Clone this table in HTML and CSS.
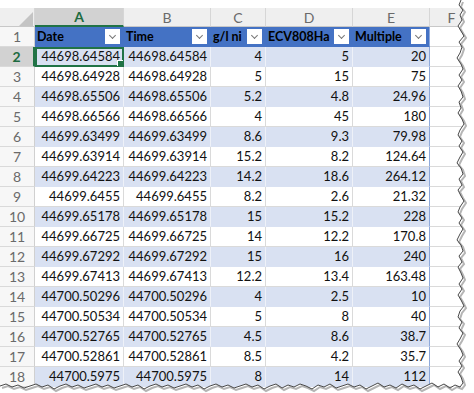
FILE: index.html
```html
<!DOCTYPE html>
<html lang="en">
<head>
    <meta charset="UTF-8">
    <title>Sheet</title>
    <link rel="stylesheet" href="styles.css">
</head>
<body>
<div class="sheet">
    <table class="grid">
        <colgroup>
            <col class="c-rh"><col class="c-a"><col class="c-b"><col class="c-c"><col class="c-d"><col class="c-e"><col class="c-f">
        </colgroup>
        <thead>
            <tr class="col-heads">
                <th class="corner"><svg width="14" height="14" viewBox="0 0 14 14"><polygon points="14,0 14,14 0,14" fill="#c4c4c4"/></svg></th>
                <th class="active">A</th><th>B</th><th>C</th><th>D</th><th>E</th><th>F</th>
            </tr>
        </thead>
        <tbody>
            <tr class="hdr">
                <td class="rh">1</td>
                <td class="th"><span class="label">Date</span><span class="dd"></span></td>
                <td class="th"><span class="label">Time</span><span class="dd"></span></td>
                <td class="th"><span class="label">g/l ni</span><span class="dd"></span></td>
                <td class="th"><span class="label">ECV808Ha</span><span class="dd"></span></td>
                <td class="th last"><span class="label">Multiple</span><span class="dd"></span></td>
                <td></td>
            </tr>
            <tr class="band"><td class="rh sel">2</td><td class="cur">44698.64584<span class="handle"></span></td><td>44698.64584</td><td>4</td><td>5</td><td class="last">20</td><td></td></tr>
            <tr><td class="rh">3</td><td>44698.64928</td><td>44698.64928</td><td>5</td><td>15</td><td class="last">75</td><td></td></tr>
            <tr class="band"><td class="rh">4</td><td>44698.65506</td><td>44698.65506</td><td>5.2</td><td>4.8</td><td class="last">24.96</td><td></td></tr>
            <tr><td class="rh">5</td><td>44698.66566</td><td>44698.66566</td><td>4</td><td>45</td><td class="last">180</td><td></td></tr>
            <tr class="band"><td class="rh">6</td><td>44699.63499</td><td>44699.63499</td><td>8.6</td><td>9.3</td><td class="last">79.98</td><td></td></tr>
            <tr><td class="rh">7</td><td>44699.63914</td><td>44699.63914</td><td>15.2</td><td>8.2</td><td class="last">124.64</td><td></td></tr>
            <tr class="band"><td class="rh">8</td><td>44699.64223</td><td>44699.64223</td><td>14.2</td><td>18.6</td><td class="last">264.12</td><td></td></tr>
            <tr><td class="rh">9</td><td>44699.6455</td><td>44699.6455</td><td>8.2</td><td>2.6</td><td class="last">21.32</td><td></td></tr>
            <tr class="band"><td class="rh">10</td><td>44699.65178</td><td>44699.65178</td><td>15</td><td>15.2</td><td class="last">228</td><td></td></tr>
            <tr><td class="rh">11</td><td>44699.66725</td><td>44699.66725</td><td>14</td><td>12.2</td><td class="last">170.8</td><td></td></tr>
            <tr class="band"><td class="rh">12</td><td>44699.67292</td><td>44699.67292</td><td>15</td><td>16</td><td class="last">240</td><td></td></tr>
            <tr><td class="rh">13</td><td>44699.67413</td><td>44699.67413</td><td>12.2</td><td>13.4</td><td class="last">163.48</td><td></td></tr>
            <tr class="band"><td class="rh">14</td><td>44700.50296</td><td>44700.50296</td><td>4</td><td>2.5</td><td class="last">10</td><td></td></tr>
            <tr><td class="rh">15</td><td>44700.50534</td><td>44700.50534</td><td>5</td><td>8</td><td class="last">40</td><td></td></tr>
            <tr class="band"><td class="rh">16</td><td>44700.52765</td><td>44700.52765</td><td>4.5</td><td>8.6</td><td class="last">38.7</td><td></td></tr>
            <tr><td class="rh">17</td><td>44700.52861</td><td>44700.52861</td><td>8.5</td><td>4.2</td><td class="last">35.7</td><td></td></tr>
            <tr class="band"><td class="rh">18</td><td>44700.5975</td><td>44700.5975</td><td>8</td><td>14</td><td class="last">112</td><td></td></tr>
        </tbody>
    </table>

    <!-- torn paper edge over the right and bottom of the grab -->
    <svg class="tear" width="474" height="393" viewBox="0 0 474 393">
        <polygon fill="#fff" points="474,0 461,0 459,5 463,10 460,15 462,20 458,26 461,31 464,36 459,42 462,47 460,53 457,58 461,64 463,69 459,75 462,80 458,86 461,91 463,97 459,102 461,108 458,113 462,119 464,124 460,130 458,135 462,141 459,146 463,152 460,157 457,163 461,168 463,174 459,179 462,185 458,190 461,196 464,201 460,207 458,212 462,218 459,223 463,229 460,234 457,240 461,245 463,251 459,256 462,262 458,267 461,273 463,278 459,284 462,289 458,295 461,300 464,306 460,311 458,317 462,322 459,328 463,333 460,339 457,344 461,350 463,355 459,361 462,366 458,372 461,377 463,383 460,387 455,385 450,388 444,384 438,387 432,383 426,386 420,389 414,385 408,387 402,384 396,388 390,385 384,387 378,383 372,386 366,389 360,385 354,387 348,384 342,386 336,388 330,384 324,387 318,385 312,389 306,386 300,384 294,387 288,385 282,388 276,384 270,386 264,389 258,385 252,387 246,384 240,386 234,388 228,385 222,387 216,384 210,386 204,389 198,385 192,387 186,384 180,386 174,388 168,385 162,387 156,384 150,386 144,389 138,385 132,387 126,384 120,386 114,388 108,385 102,387 96,384 90,386 84,388 78,385 72,387 66,384 60,386 54,389 48,385 42,387 36,384 30,386 24,388 18,385 12,387 6,384 0,386 0,393 474,393"/>
        <polyline class="shade" transform="translate(2,2)" points="461,0 459,5 463,10 460,15 462,20 458,26 461,31 464,36 459,42 462,47 460,53 457,58 461,64 463,69 459,75 462,80 458,86 461,91 463,97 459,102 461,108 458,113 462,119 464,124 460,130 458,135 462,141 459,146 463,152 460,157 457,163 461,168 463,174 459,179 462,185 458,190 461,196 464,201 460,207 458,212 462,218 459,223 463,229 460,234 457,240 461,245 463,251 459,256 462,262 458,267 461,273 463,278 459,284 462,289 458,295 461,300 464,306 460,311 458,317 462,322 459,328 463,333 460,339 457,344 461,350 463,355 459,361 462,366 458,372 461,377 463,383 460,387 455,385 450,388 444,384 438,387 432,383 426,386 420,389 414,385 408,387 402,384 396,388 390,385 384,387 378,383 372,386 366,389 360,385 354,387 348,384 342,386 336,388 330,384 324,387 318,385 312,389 306,386 300,384 294,387 288,385 282,388 276,384 270,386 264,389 258,385 252,387 246,384 240,386 234,388 228,385 222,387 216,384 210,386 204,389 198,385 192,387 186,384 180,386 174,388 168,385 162,387 156,384 150,386 144,389 138,385 132,387 126,384 120,386 114,388 108,385 102,387 96,384 90,386 84,388 78,385 72,387 66,384 60,386 54,389 48,385 42,387 36,384 30,386 24,388 18,385 12,387 6,384 0,386"/>
        <polyline class="edge" points="461,0 459,5 463,10 460,15 462,20 458,26 461,31 464,36 459,42 462,47 460,53 457,58 461,64 463,69 459,75 462,80 458,86 461,91 463,97 459,102 461,108 458,113 462,119 464,124 460,130 458,135 462,141 459,146 463,152 460,157 457,163 461,168 463,174 459,179 462,185 458,190 461,196 464,201 460,207 458,212 462,218 459,223 463,229 460,234 457,240 461,245 463,251 459,256 462,262 458,267 461,273 463,278 459,284 462,289 458,295 461,300 464,306 460,311 458,317 462,322 459,328 463,333 460,339 457,344 461,350 463,355 459,361 462,366 458,372 461,377 463,383 460,387 455,385 450,388 444,384 438,387 432,383 426,386 420,389 414,385 408,387 402,384 396,388 390,385 384,387 378,383 372,386 366,389 360,385 354,387 348,384 342,386 336,388 330,384 324,387 318,385 312,389 306,386 300,384 294,387 288,385 282,388 276,384 270,386 264,389 258,385 252,387 246,384 240,386 234,388 228,385 222,387 216,384 210,386 204,389 198,385 192,387 186,384 180,386 174,388 168,385 162,387 156,384 150,386 144,389 138,385 132,387 126,384 120,386 114,388 108,385 102,387 96,384 90,386 84,388 78,385 72,387 66,384 60,386 54,389 48,385 42,387 36,384 30,386 24,388 18,385 12,387 6,384 0,386"/>
    </svg>
</div>
</body>
</html>
```

FILE: styles.css
```css
body{
    margin: 0;
    background-color: white;
    font-family: Lato, "Open Sans", sans-serif;
    overflow: hidden;
}

.sheet{
    position: relative;
    width: 474px;
    height: 393px;
    padding-top: 8px;
    box-sizing: border-box;
    overflow: hidden;
}

.grid{
    border-collapse: separate;
    border-spacing: 0;
    table-layout: fixed;
    width: 474px;
    font-size: 13px;
    color: #111;
}
.c-rh{ width: 35px; }
.c-a{ width: 89px; }
.c-b{ width: 87px; }
.c-c{ width: 55px; }
.c-d{ width: 87px; }
.c-e{ width: 77px; }
.c-f{ width: 44px; }

th, td{
    box-sizing: border-box;
    padding: 0 3px;
    white-space: nowrap;
    overflow: hidden;
}

.col-heads th{
    height: 18px;
    background-color: #efefef;
    border-right: 1px solid #d6d6d6;
    border-bottom: 1px solid #c8c8c8;
    color: #6a6a6a;
    font-weight: normal;
    font-size: 14px;
    text-align: center;
    line-height: 17px;
}
.col-heads th.corner{
    text-align: right;
    padding: 0 1px 0 0;
    vertical-align: bottom;
    line-height: 0;
}
.col-heads th.active{
    background-color: #d2d2d2;
    color: #1d6b40;
    font-weight: bold;
    border-bottom: 2px solid #217346;
}

td{
    height: 20px;
    line-height: 19px;
    text-align: right;
    border-right: 1px solid #dadada;
    border-bottom: 1px solid #dadada;
}
td.rh{
    background-color: #f7f7f7;
    color: #6a6a6a;
    font-size: 14px;
    text-align: center;
    border-right: 1px solid #d0d0d0;
}
td.rh.sel{
    background-color: #d2d2d2;
    color: #1d6b40;
    font-weight: bold;
    border-right: 2px solid #217346;
}

.band td{
    background-color: #d9e1f2;
    border-right-color: #eef1f8;
    border-bottom-color: #d9e1f2;
}
.band td.rh{
    background-color: #f7f7f7;
    border-right-color: #d0d0d0;
    border-bottom-color: #dadada;
}
.band td.rh.sel{
    background-color: #d2d2d2;
    border-right-color: #217346;
}
.band td:last-child{
    background-color: white;
    border-right-color: #dadada;
    border-bottom-color: #dadada;
}
td.last{
    border-right: 1px solid #8ea9db;
}
.band td.last{
    border-right-color: #8ea9db;
}

.hdr td.th{
    position: relative;
    background-color: #4472c4;
    text-align: left;
    padding-left: 2px;
    border-right-color: #4472c4;
    border-bottom-color: #4472c4;
}
.hdr td.th.last{
    border-right-color: #8ea9db;
}
.label{
    color: #000;
    font-size: 12.5px;
    font-weight: bold;
}

.dd{
    position: absolute;
    right: 3px;
    top: 2px;
    width: 15px;
    height: 15px;
    background-color: white;
}
.dd::after{
    content: "";
    position: absolute;
    left: 5px;
    top: 4px;
    width: 4px;
    height: 4px;
    border-right: 1px solid #777;
    border-bottom: 1px solid #777;
    transform: rotate(45deg);
}

td.cur{
    position: relative;
    outline: 2px solid #217346;
    outline-offset: -2px;
}
.handle{
    position: absolute;
    right: -1px;
    bottom: -1px;
    width: 5px;
    height: 5px;
    background-color: #217346;
    border: 1px solid white;
}

.tear{
    position: absolute;
    left: 0;
    top: 0;
}
.tear .shade{
    fill: none;
    stroke: #b5b5b5;
    stroke-width: 2;
}
.tear .edge{
    fill: none;
    stroke: #4a4a4a;
    stroke-width: 1;
}
```
